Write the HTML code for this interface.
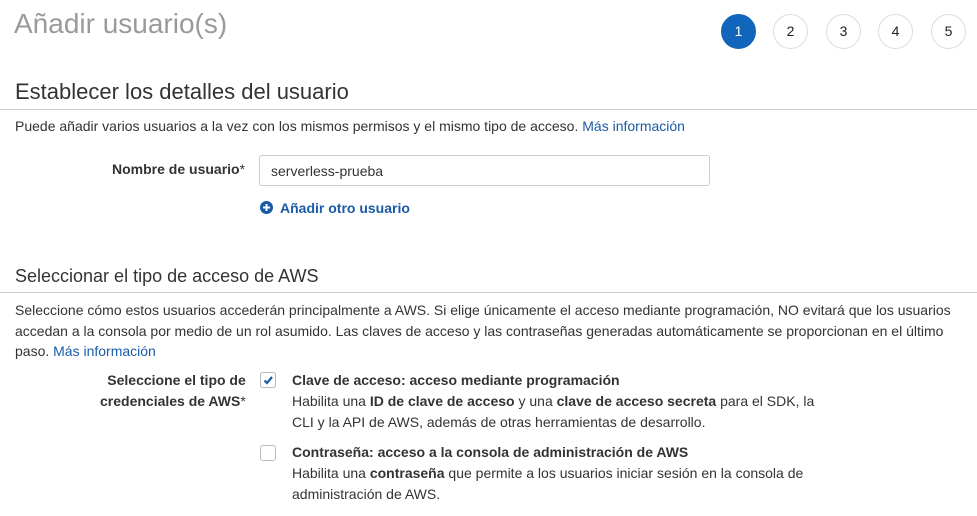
<!DOCTYPE html>
<html><head><meta charset="utf-8"><style>
body{margin:0;width:977px;height:516px;overflow:hidden;background:#fff;font-family:"Liberation Sans",Arial,sans-serif;color:#333;font-size:14px}
.a{position:absolute;white-space:nowrap}
.c{position:absolute;top:14px;width:35px;height:35px;border-radius:50%;border:1px solid #ddd;box-sizing:border-box;text-align:center;line-height:33px;font-size:14px;color:#222}
.hr{position:absolute;left:0;width:977px;height:1px;background:#ccc}
a{color:#1a5ba6;text-decoration:none}
.cb{position:absolute;left:260px;width:16px;height:16px;border:1px solid #bbb;border-radius:3px;box-sizing:border-box}
</style></head><body>
<div class="a" style="left:14px;top:8px;font-size:28px;color:#9a9a9a">Añadir usuario(s)</div>
<div class="c" style="left:721px;background:#1166bb;border-color:#1166bb;color:#fff">1</div>
<div class="c" style="left:773px">2</div>
<div class="c" style="left:826px">3</div>
<div class="c" style="left:878px">4</div>
<div class="c" style="left:931px">5</div>
<div class="a" style="left:15px;top:79px;font-size:22px;color:#333">Establecer los detalles del usuario</div>
<div class="hr" style="top:109px"></div>
<div class="a" style="left:15px;top:118px">Puede añadir varios usuarios a la vez con los mismos permisos y el mismo tipo de acceso. <a>Más información</a></div>
<div class="a" style="left:112px;top:161px;font-weight:bold">Nombre de usuario<span style="font-weight:normal">*</span></div>
<div class="a" style="left:259px;top:155px;width:451px;height:31px;border:1px solid #ccc;border-radius:3px;box-sizing:border-box;padding:7px 11px;color:#333">serverless-prueba</div>
<svg class="a" style="left:260px;top:201px" width="13" height="13" viewBox="0 0 13 13"><circle cx="6.5" cy="6.5" r="6.5" fill="#1a5ba6"/><rect x="3" y="5.5" width="7" height="2" fill="#fff"/><rect x="5.5" y="3" width="2" height="7" fill="#fff"/></svg>
<div class="a" style="left:280px;top:200px;font-weight:bold;color:#1a5ba6">Añadir otro usuario</div>
<div class="a" style="left:15px;top:266px;font-size:18px;color:#333">Seleccionar el tipo de acceso de AWS</div>
<div class="hr" style="top:292px"></div>
<div class="a" style="left:15px;top:300px;line-height:20.5px;white-space:normal;width:955px">Seleccione cómo estos usuarios accederán principalmente a AWS. Si elige únicamente el acceso mediante programación, NO evitará que los usuarios accedan a la consola por medio de un rol asumido. Las claves de acceso y las contraseñas generadas automáticamente se proporcionan en el último paso. <a>Más información</a></div>
<div class="a" style="left:100px;top:370px;font-weight:bold;text-align:right;line-height:21px">Seleccione el tipo de<br>credenciales de AWS<span style="font-weight:normal">*</span></div>
<div class="cb" style="top:372px"></div>
<svg class="a" style="left:262px;top:374px" width="12" height="12" viewBox="0 0 12 12"><path d="M2.5 6.5l2.5 2.5 5-6" stroke="#1a5ba6" stroke-width="2.2" fill="none"/></svg>
<div class="a" style="left:292px;top:370px;line-height:21px"><b>Clave de acceso: acceso mediante programación</b><br>Habilita una <b>ID de clave de acceso</b> y una <b>clave de acceso secreta</b> para el SDK, la<br>CLI y la API de AWS, además de otras herramientas de desarrollo.</div>
<div class="cb" style="top:445px"></div>
<div class="a" style="left:292px;top:442px;line-height:21px"><b>Contraseña: acceso a la consola de administración de AWS</b><br>Habilita una <b>contraseña</b> que permite a los usuarios iniciar sesión en la consola de<br>administración de AWS.</div>
</body></html>
